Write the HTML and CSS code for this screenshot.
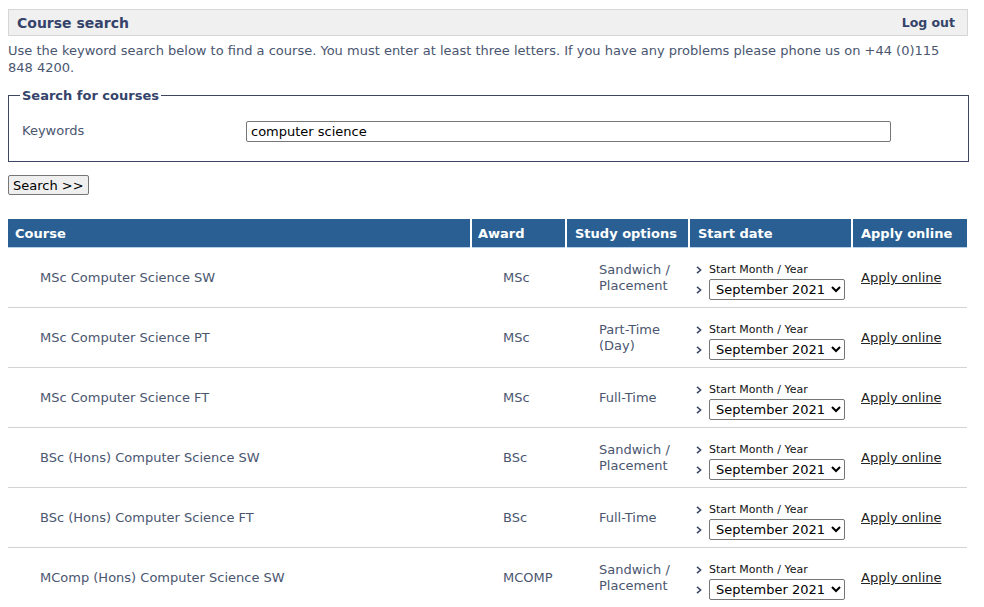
FILE: index.html
```html
<!DOCTYPE html>
<html lang="en">
<head>
<meta charset="utf-8">
<title>Course search</title>
<link rel="stylesheet" href="styles.css">
</head>
<body>
<div class="page">
  <div class="titlebar">
    <h1 class="title">Course search</h1>
    <a class="logout" href="#">Log out</a>
  </div>
  <p class="intro">Use the keyword search below to find a course. You must enter at least three letters. If you have any problems please phone us on +44 (0)115 848 4200.</p>
  <fieldset class="searchbox">
    <legend class="legend">Search for courses</legend>
    <div class="field">
      <label class="label" for="kw">Keywords</label>
      <input class="input" id="kw" type="text" value="computer science">
    </div>
  </fieldset>
  <button class="btn" type="button">Search &gt;&gt;</button>

  <div class="results">
    <div class="row head">
      <div class="th">Course</div>
      <div class="th">Award</div>
      <div class="th">Study options</div>
      <div class="th">Start date</div>
      <div class="th">Apply online</div>
    </div>

    <div class="row">
      <div class="td course">MSc Computer Science SW</div>
      <div class="td award">MSc</div>
      <div class="td study">Sandwich /<br>Placement</div>
      <div class="td start">
        <div class="sline"><svg class="chev" viewBox="0 0 6 8"><polyline points="1,0.8 4.6,4 1,7.2"/></svg><span class="small">Start Month / Year</span></div>
        <div class="sline"><svg class="chev" viewBox="0 0 6 8"><polyline points="1,0.8 4.6,4 1,7.2"/></svg><select class="sel"><option>September 2021</option></select></div>
      </div>
      <div class="td apply"><a href="#">Apply online</a></div>
    </div>

    <div class="row">
      <div class="td course">MSc Computer Science PT</div>
      <div class="td award">MSc</div>
      <div class="td study">Part-Time<br>(Day)</div>
      <div class="td start">
        <div class="sline"><svg class="chev" viewBox="0 0 6 8"><polyline points="1,0.8 4.6,4 1,7.2"/></svg><span class="small">Start Month / Year</span></div>
        <div class="sline"><svg class="chev" viewBox="0 0 6 8"><polyline points="1,0.8 4.6,4 1,7.2"/></svg><select class="sel"><option>September 2021</option></select></div>
      </div>
      <div class="td apply"><a href="#">Apply online</a></div>
    </div>

    <div class="row">
      <div class="td course">MSc Computer Science FT</div>
      <div class="td award">MSc</div>
      <div class="td study">Full-Time</div>
      <div class="td start">
        <div class="sline"><svg class="chev" viewBox="0 0 6 8"><polyline points="1,0.8 4.6,4 1,7.2"/></svg><span class="small">Start Month / Year</span></div>
        <div class="sline"><svg class="chev" viewBox="0 0 6 8"><polyline points="1,0.8 4.6,4 1,7.2"/></svg><select class="sel"><option>September 2021</option></select></div>
      </div>
      <div class="td apply"><a href="#">Apply online</a></div>
    </div>

    <div class="row">
      <div class="td course">BSc (Hons) Computer Science SW</div>
      <div class="td award">BSc</div>
      <div class="td study">Sandwich /<br>Placement</div>
      <div class="td start">
        <div class="sline"><svg class="chev" viewBox="0 0 6 8"><polyline points="1,0.8 4.6,4 1,7.2"/></svg><span class="small">Start Month / Year</span></div>
        <div class="sline"><svg class="chev" viewBox="0 0 6 8"><polyline points="1,0.8 4.6,4 1,7.2"/></svg><select class="sel"><option>September 2021</option></select></div>
      </div>
      <div class="td apply"><a href="#">Apply online</a></div>
    </div>

    <div class="row">
      <div class="td course">BSc (Hons) Computer Science FT</div>
      <div class="td award">BSc</div>
      <div class="td study">Full-Time</div>
      <div class="td start">
        <div class="sline"><svg class="chev" viewBox="0 0 6 8"><polyline points="1,0.8 4.6,4 1,7.2"/></svg><span class="small">Start Month / Year</span></div>
        <div class="sline"><svg class="chev" viewBox="0 0 6 8"><polyline points="1,0.8 4.6,4 1,7.2"/></svg><select class="sel"><option>September 2021</option></select></div>
      </div>
      <div class="td apply"><a href="#">Apply online</a></div>
    </div>

    <div class="row">
      <div class="td course">MComp (Hons) Computer Science SW</div>
      <div class="td award">MCOMP</div>
      <div class="td study">Sandwich /<br>Placement</div>
      <div class="td start">
        <div class="sline"><svg class="chev" viewBox="0 0 6 8"><polyline points="1,0.8 4.6,4 1,7.2"/></svg><span class="small">Start Month / Year</span></div>
        <div class="sline"><svg class="chev" viewBox="0 0 6 8"><polyline points="1,0.8 4.6,4 1,7.2"/></svg><select class="sel"><option>September 2021</option></select></div>
      </div>
      <div class="td apply"><a href="#">Apply online</a></div>
    </div>
  </div>
</div>
</body>
</html>
```

FILE: styles.css
```css
* { box-sizing: border-box; }
html, body { margin: 0; padding: 0; background: #fff; }
body {
  font-family: "DejaVu Sans", Verdana, sans-serif;
  font-size: 13px;
  color: #4a5670;
}
.page {
  width: 960px;
  margin: 9px 0 0 8px;
}
.titlebar {
  display: flex;
  align-items: center;
  justify-content: space-between;
  height: 27px;
  padding: 0 12px 0 8px;
  background: #f0f0f0;
  border: 1px solid #d6d6d6;
}
.title {
  margin: 0;
  font-size: 14px;
  font-weight: bold;
  color: #35436a;
}
.logout {
  font-size: 12.5px;
  font-weight: bold;
  color: #35436a;
  text-decoration: none;
}
.intro {
  margin: 6px 0 0 0;
  font-size: 13px;
  line-height: 17px;
  color: #4a5670;
}
.searchbox {
  margin: 12px 0 0 0;
  padding: 0 11px 19px 11px;
  border: 1px solid #3c4660;
  width: 961px;
}
.legend {
  padding: 0 2px;
  font-size: 13px;
  font-weight: bold;
  color: #35436a;
}
.field {
  display: grid;
  grid-template-columns: 224px 645px;
  align-items: center;
  padding: 18px 0 0 2px;
}
.label {
  font-size: 13px;
  color: #4a5670;
  margin-top: -3px;
}
.input {
  height: 21px;
  padding: 0 4px;
  border: 1px solid #767676;
  border-radius: 2px;
  font-family: "DejaVu Sans", Verdana, sans-serif;
  font-size: 13px;
  color: #000;
}
.btn {
  display: block;
  margin-top: 13px;
  height: 20px;
  padding: 0 4px;
  border: 1px solid #767676;
  border-radius: 2px;
  background: #efefef;
  font-family: "DejaVu Sans", Verdana, sans-serif;
  font-size: 13px;
  color: #000;
}
.results {
  margin-top: 24px;
  width: 959px;
}
.row {
  display: grid;
  grid-template-columns: 462px 93px 121px 161px 114px;
  column-gap: 2px;
  height: 60px;
  border-bottom: 1px solid #d3d3d3;
  align-items: center;
}
.row.head {
  height: 29px;
  border-bottom: none;
  align-items: stretch;
}
.th {
  background: #2a5f94;
  border-bottom: 1px solid #b8d0ea;
  color: #fff;
  font-weight: bold;
  font-size: 13px;
  padding: 0 0 0 7px;
  display: flex;
  align-items: center;
}
.th:nth-child(2) { padding-left: 6px; }
.th:nth-child(3), .th:nth-child(4), .th:nth-child(5) { padding-left: 8px; }
.td {
  font-size: 13px;
  line-height: 16px;
  color: #4a5670;
}
.course { padding-left: 32px; }
.award { padding-left: 31px; }
.study { padding-left: 32px; }
.start { padding-left: 6px; padding-top: 8px; }
.apply { padding-left: 8px; padding-top: 1px; }
.apply a { color: #222; text-decoration: underline; }
.sline {
  display: flex;
  align-items: center;
  gap: 7px;
}
.sline + .sline { margin-top: 2px; }
.chev {
  width: 6px;
  height: 8px;
  fill: none;
  stroke: #3c4a66;
  stroke-width: 1.6;
}
.small {
  font-size: 11px;
  color: #111;
  line-height: 14px;
}
.sel {
  width: 136px;
  height: 21px;
  border: 1px solid #767676;
  border-radius: 2px;
  background: #fff;
  font-family: "DejaVu Sans", Verdana, sans-serif;
  font-size: 13px;
  color: #000;
  padding: 0 0 0 2px;
}
```
